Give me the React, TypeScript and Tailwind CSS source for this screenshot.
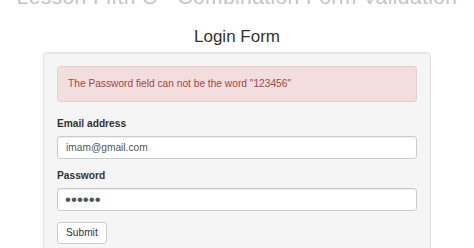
const fieldClass =
  "block w-full h-[23px] rounded-[3px] border border-[#cccccc] bg-white px-[8px] text-[10.2px] text-[#555555] shadow-[inset_0_1px_1px_rgba(0,0,0,0.075)] outline-none";

export default function App() {
  return (
    <div className="w-[474px] h-[248px] overflow-hidden bg-white font-['Liberation_Sans',Arial,sans-serif] text-[#333333]">
      {/* page heading, only its lower edge shows */}
      <div className="h-[7px] overflow-hidden">
        <h1 className="mt-[-16px] text-center text-[21px] leading-[26px] text-[#c4c4c4] whitespace-nowrap tracking-[0.4px]">
          Lesson Fifth C - Combination Form Validation
        </h1>
      </div>

      <h2 className="mt-[20px] mb-[5px] text-center text-[17px] leading-[20px]">Login Form</h2>

      <div className="mx-[43px] rounded-[4px] border border-[#e3e3e3] bg-[#f5f5f5] p-[13px] shadow-[inset_0_1px_1px_rgba(0,0,0,0.05)]">
        <div className="flex h-[36px] items-center rounded-[3px] border border-[#ebccd1] bg-[#f2dede] px-[10px] text-[10.2px] text-[#a94442]">
          The Password field can not be the word "123456"
        </div>

        <form className="mt-[15px]">
          <label className="block text-[10.2px] font-bold leading-[14px] mb-[5px]">Email address</label>
          <input className={fieldClass} type="text" value="imam@gmail.com" readOnly />

          <label className="mt-[10px] block text-[10.2px] font-bold leading-[14px] mb-[5px]">Password</label>
          <input className={`${fieldClass} !text-[17px] !pl-[7px] text-[#444444]`} type="password" value="123456" readOnly />

          <button
            type="button"
            className="mt-[11px] h-[22px] rounded-[3px] border border-[#cccccc] bg-white px-[8px] text-[10.2px] text-[#333333]"
          >
            Submit
          </button>
        </form>
      </div>
    </div>
  );
}
